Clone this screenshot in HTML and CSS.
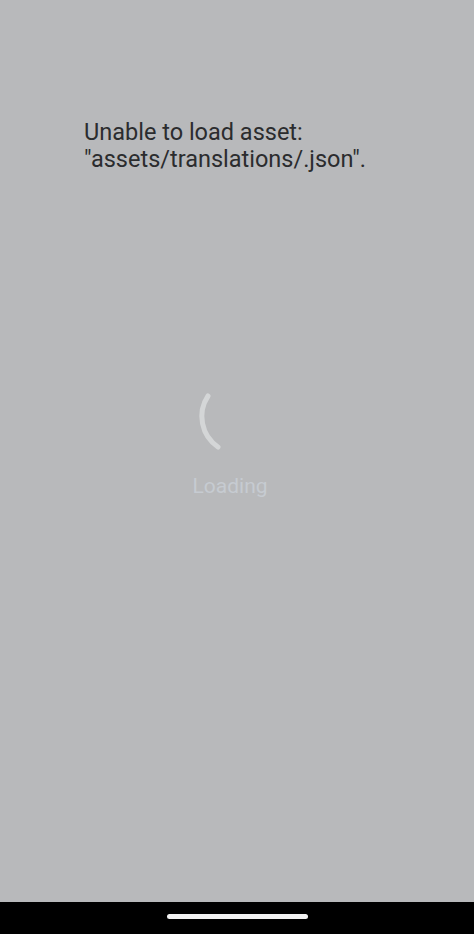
FILE: index.html
```html
<!DOCTYPE html>
<html>
<head>
<meta charset="utf-8">
<link rel="stylesheet" href="styles.css">
</head>
<body>
<div class="screen">
  <div class="content">
    <p class="error">Unable to load asset:<br>"assets/translations/.json".</p>
    <div class="loader">
      <svg class="spinner" width="84" height="84" viewBox="0 0 84 84">
        <path d="M 13 19 A 37 37 0 0 0 23 70" fill="none" stroke="#d4d6d7" stroke-width="5" stroke-linecap="round"/>
      </svg>
      <div class="loading">Loading</div>
    </div>
  </div>
  <div class="navbar"><div class="handle"></div></div>
</div>
</body>
</html>
```
FILE: styles.css
```css
html, body {
  margin: 0;
  padding: 0;
}
.screen {
  width: 474px;
  height: 934px;
  display: flex;
  flex-direction: column;
  background: #b8b9bb;
  font-family: Roboto, "Noto Sans", sans-serif;
}
.content {
  flex: 1;
  display: flex;
  flex-direction: column;
}
.error {
  margin: 119px 0 0 84px;
  font-size: 23.5px;
  line-height: 27px;
  color: #2b2c2e;
}
.loader {
  margin-top: 204px;
  display: flex;
  flex-direction: column;
  align-items: center;
}
.spinner {
  display: block;
}
.loading {
  margin-top: 13px;
  font-size: 21px;
  color: #c6cbd1;
  margin-left: -14px;
}
.navbar {
  height: 32px;
  background: #000;
  display: flex;
  justify-content: center;
  padding-top: 12px;
  box-sizing: border-box;
}
.handle {
  width: 141px;
  height: 5px;
  border-radius: 3px;
  background: #f2f2f2;
}
```
